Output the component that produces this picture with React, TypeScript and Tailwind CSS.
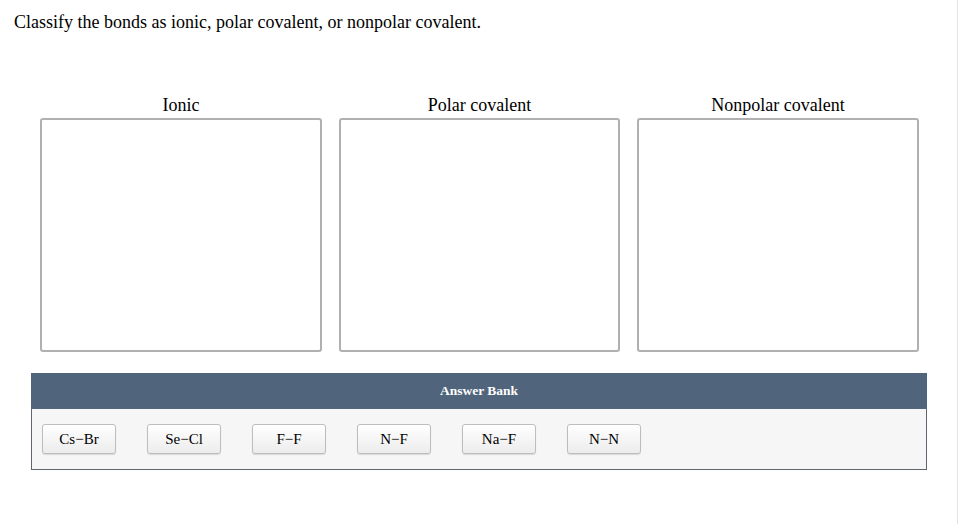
const categories = [
    { label: "Ionic", w: "w-[282px]" },
    { label: "Polar covalent", w: "w-[281px]" },
    { label: "Nonpolar covalent", w: "w-[282px]" },
];
const answers = ["Cs−Br", "Se−Cl", "F−F", "N−F", "Na−F", "N−N"];

export default function App() {
    return (
        <div
            className="relative h-[524px] w-[961px] overflow-hidden bg-white text-black"
            style={{ fontFamily: '"Liberation Serif", "Times New Roman", serif' }}
        >
            <div className="absolute top-0 right-[3px] h-full w-px bg-[#e3e3e3]" />
            <p className="pt-[11px] pl-[14px] text-[18px] leading-[22px]">
                Classify the bonds as ionic, polar covalent, or nonpolar covalent.
            </p>

            {/* drop targets */}
            <div className="mt-[61px] ml-[40px] flex gap-[17px]">
                {categories.map((c) => (
                    <div key={c.label} className={`flex flex-col ${c.w}`}>
                        <div className="h-[24px] text-center text-[18px] leading-[22px]">
                            {c.label}
                        </div>
                        <div className="h-[234px] rounded-[3px] border-2 border-[#b0b0b0] bg-white" />
                    </div>
                ))}
            </div>

            {/* answer bank */}
            <div className="mt-[21px] ml-[31px] w-[896px]">
                <div className="flex h-[36px] items-center justify-center bg-[#50647b] text-[13.5px] font-bold text-white">
                    Answer Bank
                </div>
                <div className="flex h-[61px] items-center gap-[31px] border border-t-0 border-[#5e6670] bg-[#f6f6f6] pl-[10px]">
                    {answers.map((a) => (
                        <div
                            key={a}
                            className="flex h-[30px] w-[74px] items-center justify-center rounded-[3px] border border-[#bdbdbd] bg-gradient-to-b from-[#ffffff] to-[#ececec] text-[15px] shadow-[0_1px_1px_rgba(0,0,0,0.12)]"
                        >
                            {a}
                        </div>
                    ))}
                </div>
            </div>
        </div>
    );
}
